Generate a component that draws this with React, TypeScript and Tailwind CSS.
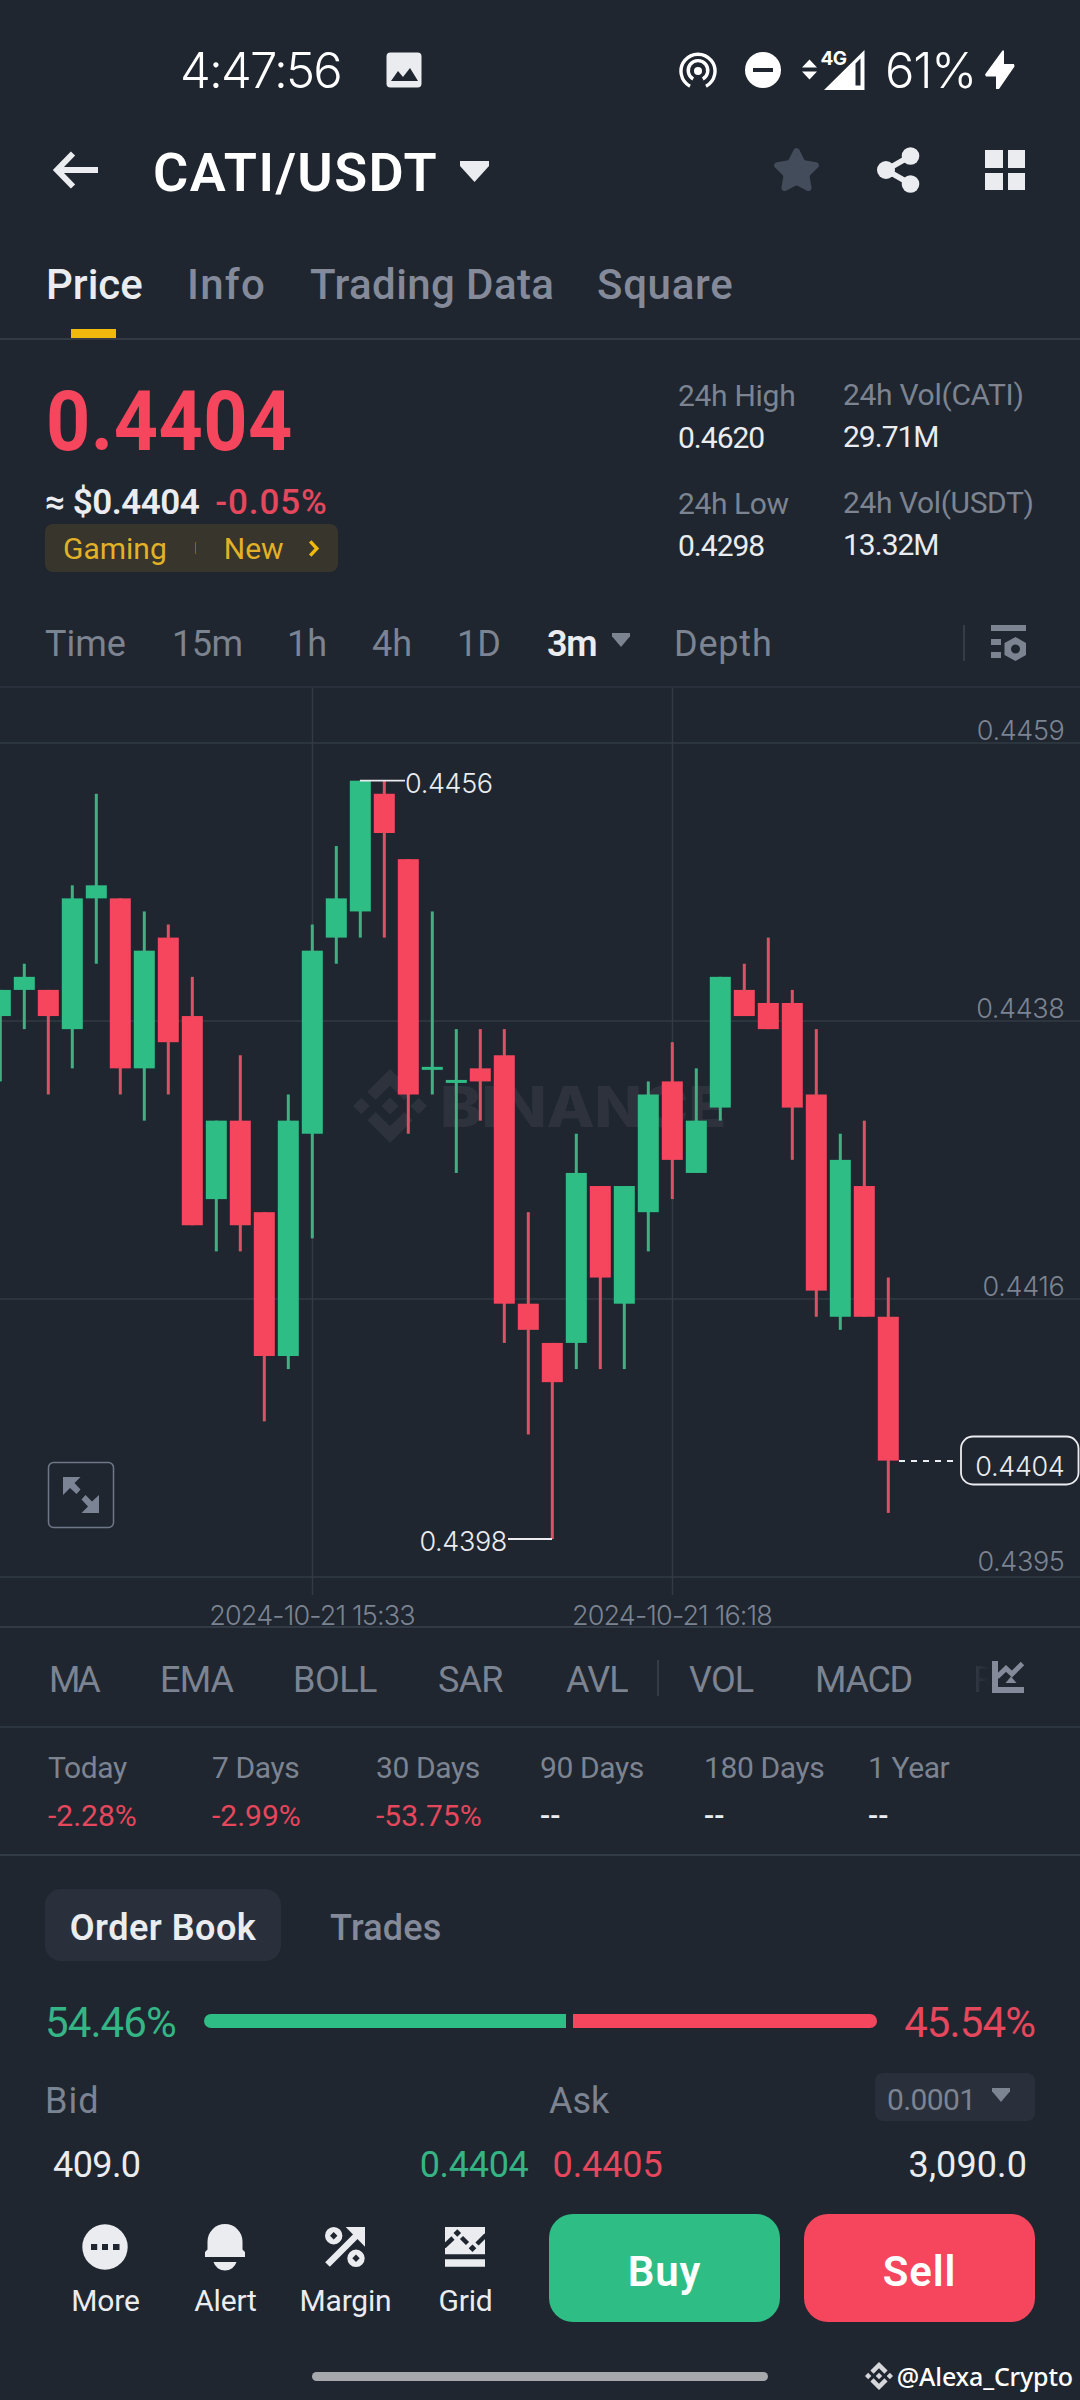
import React from "react";
import { clsx } from "clsx";
import { Star } from "lucide-react";

type Candle = [open: number, high: number, low: number, close: number];

// 3m candles, in ticks of 0.0001
const candles: Candle[] = [
  [4438, 4440, 4433, 4440],
  [4440, 4442, 4437, 4441],
  [4440, 4440, 4432, 4438],
  [4437, 4448, 4434, 4447],
  [4447, 4455, 4442, 4448],
  [4447, 4447, 4432, 4434],
  [4434, 4446, 4430, 4443],
  [4444, 4445, 4432, 4436],
  [4438, 4441, 4422, 4422],
  [4424, 4430, 4420, 4430],
  [4430, 4435, 4420, 4422],
  [4423, 4423, 4407, 4412],
  [4412, 4432, 4411, 4430],
  [4429, 4445, 4421, 4443],
  [4444, 4451, 4442, 4447],
  [4446, 4456, 4444, 4456],
  [4455, 4456, 4444, 4452],
  [4450, 4450, 4429, 4432],
  [4434, 4446, 4432, 4434],
  [4433, 4437, 4426, 4433],
  [4434, 4437, 4430, 4433],
  [4435, 4437, 4413, 4416],
  [4416, 4423, 4406, 4414],
  [4413, 4413, 4398, 4410],
  [4413, 4429, 4411, 4426],
  [4425, 4425, 4411, 4418],
  [4416, 4425, 4411, 4425],
  [4423, 4433, 4420, 4432],
  [4433, 4436, 4424, 4427],
  [4426, 4434, 4426, 4430],
  [4431, 4441, 4430, 4441],
  [4440, 4442, 4438, 4438],
  [4439, 4444, 4437, 4437],
  [4439, 4440, 4427, 4431],
  [4432, 4437, 4415, 4417],
  [4415, 4429, 4414, 4427],
  [4425, 4430, 4415, 4415],
  [4415, 4418, 4400, 4404],
];

const priceLines = [
  { y: 55, label: "0.4459", labelY: 52 },
  { y: 333, label: "0.4438", labelY: 330 },
  { y: 611, label: "0.4416", labelY: 608 },
  { y: 889, label: "0.4395", labelY: 883 },
];

const timeLines = [
  { x: 312, label: "2024-10-21 15:33" },
  { x: 672, label: "2024-10-21 16:18" },
];

const stats = [
  { label: "24h High", value: "0.4620", label2: "24h Low", value2: "0.4298", width: "w-[165px]" },
  { label: "24h Vol(CATI)", value: "29.71M", label2: "24h Vol(USDT)", value2: "13.32M", width: "w-[237px] -mt-px" },
];

const periods = [
  { label: "Today", value: "-2.28%" },
  { label: "7 Days", value: "-2.99%" },
  { label: "30 Days", value: "-53.75%" },
  { label: "90 Days", value: "--" },
  { label: "180 Days", value: "--" },
  { label: "1 Year", value: "--" },
];

const toY = (tick: number) => 92.7 + (4456 - tick) * 13.075;

function BinanceLogo(props: React.SVGProps<SVGSVGElement>) {
  return (
    <svg viewBox="0 0 126.61 126.61" fill="currentColor" {...props}>
      <path d="M38.73 53.2l24.59-24.58 24.6 24.6 14.3-14.31L63.32 0l-38.9 38.9zM0 63.31L14.3 49l14.31 14.31-14.31 14.3zM38.73 73.41L63.32 98l24.6-24.6 14.31 14.29-38.91 38.92-38.91-38.88zM98 63.31L112.3 49l14.31 14.3-14.31 14.32zM77.83 63.3L63.32 48.78 48.81 63.28l14.51 14.5z" />
    </svg>
  );
}

function Caret({ className }: { className?: string }) {
  return (
    <svg viewBox="0 0 28 21" preserveAspectRatio="none" fill="currentColor" className={className}>
      <path d="M0 0H28V5L14 21L0 5Z" />
    </svg>
  );
}

function StatusBar() {
  return (
    <div className="flex h-[140px] items-center font-['Inter',sans-serif] text-white">
      <span className="ml-[180px] w-[206px] text-[49px] font-light leading-none tracking-[-1.8px]">4:47:56</span>
      <svg viewBox="0 0 36 36" className="size-9">
        <rect x="0.5" y="0.5" width="35" height="35" rx="4" fill="#eaecef" />
        <path d="M5 29l7-10 5 6 7-9 8 13z" fill="#1f262f" />
      </svg>
      <svg viewBox="0 0 38 38" fill="none" stroke="currentColor" strokeWidth="3.4" className="ml-[257px] size-[38px]">
        <path d="M11 35.2A17 17 0 1 1 27 35.2" />
        <path d="M14.2 28A9.8 9.8 0 1 1 23.8 28" />
        <circle cx="19" cy="20" r="4" fill="currentColor" stroke="none" />
      </svg>
      <svg viewBox="0 0 36 36" className="ml-[28px] size-9">
        <circle cx="18" cy="18" r="18" fill="currentColor" />
        <path d="M8 18H28" stroke="#1f262f" strokeWidth="4" />
      </svg>
      <svg viewBox="0 0 64 42" fill="currentColor" className="ml-[20px] h-[42px] w-[64px] overflow-visible">
        <path d="M1 18.5L8.5 10.5 16 18.5zM1 22.5L8.5 30.500 16 22.500z" />
        <text x="19.5" y="15.5" className="text-[19px] font-bold tracking-[-0.5px]">4G</text>
        <path fillRule="evenodd" d="M23 41L63.5 1V41zM54.5 14.5V36.5H59.5V9.5z" />
      </svg>
      <span className="ml-[20px] w-[100px] text-[49px] font-light leading-none tracking-[-1.3px]">61%</span>
      <svg viewBox="0 0 30 40" fill="currentColor" className="h-10 w-[30px]">
        <path d="M17.5 0.5L0 24.5L1 26.5H11V39H14L29.5 16.5L29 14H19V0.5z" />
      </svg>
    </div>
  );
}

function Header() {
  return (
    <header className="flex h-16 items-center text-[#eaecef]">
      <svg viewBox="0 0 48 40" fill="none" stroke="currentColor" strokeWidth="6" className="ml-[51px] mb-1 h-10 w-12">
        <path d="M22 3.5L6 20L22 36.5M6 20H47" />
      </svg>
      <h1 className="ml-[54px] mt-px text-[54px] font-semibold leading-none tracking-[1.4px] text-white">CATI/USDT</h1>
      <Caret className="mb-0.5 ml-[22px] h-[21px] w-[29px]" />
      <Star fill="currentColor" strokeWidth={2} className="mb-1 ml-auto size-[49px] text-[#434c5a]" />
      <svg viewBox="0 0 46 48" fill="currentColor" className="mb-1 ml-[54px] h-12 w-[46px]">
        <path d="M35.5 10L11 24L35.5 38" fill="none" stroke="currentColor" strokeWidth="5.5" />
        <circle cx="11" cy="24" r="9" />
        <circle cx="35.5" cy="10" r="8.8" />
        <circle cx="35.5" cy="38" r="8.8" />
      </svg>
      <div className="mb-1 ml-[64px] mr-[55px] grid size-10 grid-cols-2 gap-[5px]">
        {[0, 1, 2, 3].map((i) => (
          <span key={i} className="bg-[#eaecef]" />
        ))}
      </div>
    </header>
  );
}

function Tabs() {
  return (
    <nav className="flex h-[136px] border-b-2 border-[#323a45] pl-[46px] text-[42px] font-medium leading-[42px] text-[#848a99]">
      <div className="flex w-[141px] flex-col pt-[60px] text-[#eaecef]">
        <span>Price</span>
        <span className="ml-[25px] mt-[23px] h-[9px] w-[45px] bg-[#f0b90b]" />
      </div>
      <span className="w-[123px] pt-[60px] tracking-[1.3px]">Info</span>
      <span className="w-[287px] pt-[60px] tracking-[0.4px]">Trading Data</span>
      <span className="pt-[60px] tracking-[0.7px]">Square</span>
    </nav>
  );
}

function PriceSummary() {
  return (
    <section className="flex h-[260px] justify-between pl-[45px]">
      <div className="flex flex-col items-start pt-[40px]">
        <div className="ml-px origin-left scale-x-[0.92] text-[84px] font-bold leading-[84px] tracking-[0.5px] text-[#f6465d]">
          0.4404
        </div>
        <div className="mt-[21px] flex gap-4 text-[35px] leading-9">
          <span className="font-semibold tracking-[-0.5px] text-[#eaecef]">≈ $0.4404</span>
          <span className="font-medium tracking-[0.9px] text-[#e5475c]">-0.05%</span>
        </div>
        <div className="mt-[3px] flex h-12 w-[293px] items-center rounded-lg bg-[#37352c] pl-[18px] text-[30px] leading-none text-[#e3b125]">
          <span className="pt-px">Gaming</span>
          <span className="ml-[28px] h-3 w-px bg-[#7d6726]" />
          <span className="ml-[28px] pt-px">New</span>
          <svg viewBox="0 0 12 18" fill="none" stroke="#f0b90b" strokeWidth="3.6" className="ml-[24px] h-[17px] w-3">
            <path d="M2 1.5L9 9L2 16.5" />
          </svg>
        </div>
      </div>
      <div className="flex pt-[35px] text-[30px] leading-[42px]">
        {stats.map((s) => (
          <div key={s.label} className={clsx("flex flex-col gap-6", s.width)}>
            <div>
              <div className="tracking-[-0.3px] text-[#7c8391]">{s.label}</div>
              <div className="font-[450] tracking-[-1px] text-[#eaecef]">{s.value}</div>
            </div>
            <div>
              <div className="tracking-[-0.4px] text-[#7c8391]">{s.label2}</div>
              <div className="font-[450] tracking-[-1px] text-[#eaecef]">{s.value2}</div>
            </div>
          </div>
        ))}
      </div>
    </section>
  );
}

function Intervals() {
  return (
    <div className="flex h-[88px] items-center border-b-2 border-[#29303b] pl-[45px] text-[36px] leading-none text-[#7c8391]">
      <span className="w-[127px] pt-0.5">Time</span>
      <span className="w-[115px] pt-0.5 tracking-[-0.5px]">15m</span>
      <span className="w-[85px] pt-0.5">1h</span>
      <span className="w-[85px] pt-0.5">4h</span>
      <span className="w-[90px] pt-0.5">1D</span>
      <span className="w-[65px] pt-0.5 font-semibold tracking-[-1.2px] text-[#eaecef]">3m</span>
      <Caret className="mb-1.5 h-[14px] w-[18px]" />
      <span className="ml-[44px] pt-0.5 tracking-[0.8px]">Depth</span>
      <span className="ml-auto h-9 w-0.5 bg-[#343c48]" />
      <svg viewBox="0 0 36 37" fill="currentColor" className="ml-[26px] mr-[53px] h-[37px] w-9">
        <path d="M0 0H35V6H0zM0 14H10V20H0zM0 27H10V33H0z" />
        <path fillRule="evenodd" d="M24.5 12L35 18V30L24.5 36L13.5 30V18zM24.5 19.5A4.5 4.5 0 1 0 24.5 28.5A4.5 4.5 0 1 0 24.5 19.5z" />
      </svg>
    </div>
  );
}

function Chart() {
  return (
    <div className="h-[940px] border-b-2 border-[#323a45]">
      <svg viewBox="0 0 1080 938" className="block h-[938px] w-[1080px] overflow-visible font-['Inter',sans-serif] text-[27px] font-light tracking-[-0.35px]">
        <g stroke="#323a45" strokeWidth="1.5">
          {priceLines.map((l) => (
            <path key={l.label} d={`M0 ${l.y}H1080`} />
          ))}
          {timeLines.map((l) => (
            <path key={l.label} d={`M${l.x + 0.5} 0V907`} />
          ))}
        </g>
        <g fill="#2d323c" color="#2d323c">
          <BinanceLogo x="353" y="381" width="74" height="74" />
          <text x="440" y="439" textLength="286" lengthAdjust="spacingAndGlyphs" className="text-[57px] font-extrabold">BINANCE</text>
        </g>
        <g fill="#7c8391">
          {priceLines.map((l) => (
            <text key={l.label} x="1064.5" y={l.labelY} textAnchor="end">{l.label}</text>
          ))}
          {timeLines.map((l) => (
            <text key={l.label} x={l.x} y="937" textAnchor="middle" className="tracking-[-0.85px]">{l.label}</text>
          ))}
        </g>
        {candles.map(([open, high, low, close], i) => {
          const x = i * 24 + 0.3;
          const up = close >= open;
          const top = toY(Math.max(open, close));
          const body = Math.abs(open - close) * 13.075;
          return (
            <g key={i}>
              <rect x={x - 1.5} y={toY(high)} width="3" height={toY(low) - toY(high)} fill={up ? "#3fb184" : "#dc5068"} />
              <rect x={x - 10.5} y={body ? top : top - 1.5} width="21" height={body || 3} fill={up ? "#2ebd85" : "#f6465d"} />
            </g>
          );
        })}
        <g fill="none" stroke="#eaecef" strokeWidth="1.8">
          <path d="M360 92.7H405M508 851H552" />
          <path d="M899 773H954" strokeDasharray="6 6" />
          <rect x="961" y="748.5" width="117.5" height="48" rx="12" />
        </g>
        <g fill="#eaecef">
          <text x="405" y="105">0.4456</text>
          <text x="507" y="863" textAnchor="end">0.4398</text>
          <text x="1064.5" y="788" textAnchor="end">0.4404</text>
        </g>
        <rect x="48.5" y="774.5" width="65" height="65" rx="5" fill="none" stroke="#6f7888" strokeWidth="1.5" />
        <g fill="#7b8495">
          <path d="M63 789H80.5L74.500 795L80.500 801.500L76.500 806L70 800L63 807z" />
          <path d="M99 825H81.500L88 818.500L81.500 811.500L85.500 807L92 813.500L99 807z" />
        </g>
      </svg>
    </div>
  );
}

function Indicators() {
  return (
    <div className="flex h-[100px] items-center overflow-hidden border-b-2 border-[#2c343f] pl-[49px] pt-[6px] text-[36px] leading-none tracking-[-0.8px] text-[#7c8391]">
      <span className="w-[111px] tracking-[-3.5px]">MA</span>
      <span className="w-[133px]">EMA</span>
      <span className="w-[145px] tracking-[-0.5px]">BOLL</span>
      <span className="w-[128px]">SAR</span>
      <span className="w-[91px]">AVL</span>
      <span className="mb-1 h-9 w-0.5 bg-[#343c48]" />
      <span className="ml-[30px] w-[126px]">VOL</span>
      <span className="w-[158px] tracking-[-1.3px]">MACD</span>
      {/* next indicator fades out under the settings icon */}
      <span className="w-4 overflow-hidden bg-gradient-to-r from-[#343b47] to-[#1f262f] bg-clip-text text-transparent">R</span>
      <svg viewBox="0 0 32 32" fill="currentColor" className="mb-1.5 ml-[3px] size-8 shrink-0 text-[#848a99]">
        <path d="M0 0H6V26H32V32H0z" />
        <path d="M5 16L14 7.5L20 13L30.5 2.5" fill="none" stroke="currentColor" strokeWidth="5" />
        <path d="M13.5 22H24.5L19 15.5z" />
      </svg>
    </div>
  );
}

function Performance() {
  return (
    <div className="flex h-32 border-b-2 border-[#323a45] pl-12 pt-[16px] text-[30px] leading-[48px]">
      {periods.map((p) => (
        <div key={p.label} className="w-[164px]">
          <div className="tracking-[-0.4px] text-[#7c8391]">{p.label}</div>
          <div className={p.value === "--" ? "font-medium text-[#eaecef]" : "text-[#e5475c]"}>{p.value}</div>
        </div>
      ))}
    </div>
  );
}

function OrderBook() {
  return (
    <section className="px-[45px] pt-[33px]">
      <div className="flex h-[72px] text-[36px] leading-[78px]">
        <span className="w-[236px] rounded-2xl bg-[#29303b] text-center font-semibold tracking-[0.5px] text-[#eaecef]">
          Order Book
        </span>
        <span className="ml-[49px] font-medium tracking-[0.2px] text-[#848a99]">Trades</span>
      </div>

      <div className="mt-[30px] flex h-[62px] items-center text-[42px] leading-none tracking-[-0.9px]">
        <span className="w-[159px] pt-0.5 text-[#35b585]">54.46%</span>
        <span className="mb-0.5 h-[14px] w-[362px] rounded-l-full bg-[#2ebd85]" />
        <span className="mb-0.5 ml-[7px] h-[14px] w-[304px] rounded-r-full bg-[#f6465d]" />
        <span className="ml-auto pt-0.5 text-[#e5475c]">45.54%</span>
      </div>

      <div className="mt-5 flex h-12 text-[36px] leading-[56px] text-[#7c8391]">
        <span className="w-[504px] tracking-[1px]">Bid</span>
        <span>Ask</span>
        <span className="ml-auto flex w-[160px] items-center rounded-lg bg-[#29303b] pl-[12px] text-[30px] leading-none tracking-[-0.6px]">
          <span className="pt-1.5">0.0001</span>
          <Caret className="mb-1 ml-[16px] h-[14px] w-[18px]" />
        </span>
      </div>

      <div className="mt-3 flex h-[62px] items-center px-2 pt-0.5 text-[36px] leading-none">
        <span className="font-[450] tracking-[-0.6px] text-[#eaecef]">409.0</span>
        <span className="ml-auto tracking-[-0.3px] text-[#35b585]">0.4404</span>
        <span className="ml-[24px] w-[474px] tracking-[-0.1px] text-[#e5475c]">0.4405</span>
        <span className="-ml-[118px] font-[450] tracking-[0.1px] text-[#eaecef]">3,090.0</span>
      </div>
    </section>
  );
}

const actions = [
  {
    label: "More",
    icon: (
      <>
        <circle cx="24" cy="24" r="22.7" />
        <path d="M10 21H16.2V27H10zM21 21H27V27H21zM32 21H38.5V27H32z" fill="#1f262f" />
      </>
    ),
  },
  {
    label: "Alert",
    icon: <path d="M24 1A17.5 17.5 0 0 1 41.5 18.5V26.5L44 29V34H4V29L6.5 26.5V18.5A17.5 17.5 0 0 1 24 1zM12.5 39H35.5A12 12 0 0 1 12.5 39z" />,
  },
  {
    label: "Margin",
    icon: (
      <>
        <path d="M6.5 41.5L38 10" stroke="currentColor" strokeWidth="6.6" />
        <path d="M24.7 4H44V23.7z" />
        <path fillRule="evenodd" d="M12.7 4A8.7 8.7 0 1 1 12.7 21.4A8.7 8.7 0 1 1 12.7 4zM12.7 9L9 12.7L12.7 16.4L16.4 12.7z" />
        <path fillRule="evenodd" d="M35 26.6A8.7 8.7 0 1 1 35 44A8.7 8.7 0 1 1 35 26.6zM35 31.6L31.3 35.3L35 39L38.7 35.3z" />
      </>
    ),
  },
  {
    label: "Grid",
    icon: (
      <>
        <path d="M4 4H44V31.3H4zM4 36.3H44V43.7H4z" />
        <path d="M3 23.5L12 15M20.5 14.5L26.5 20.5M36 21L45 12" stroke="#1f262f" strokeWidth="4.5" />
        <path d="M16.3 6.2L20.1 10L16.3 13.8L12.5 10zM31.5 21.5L35.3 25.3L31.5 29.1L27.7 25.3z" fill="#1f262f" />
      </>
    ),
  },
];

function BottomBar() {
  return (
    <footer className="mt-[19px]">
      <div className="flex h-[108px] pl-[45px] pr-[45px]">
        {actions.map((a) => (
          <div key={a.label} className="flex w-[120px] flex-col items-center pt-[9px] text-[30px] leading-none text-[#eaecef]">
            <svg viewBox="0 0 48 48" fill="currentColor" className="size-12">
              {a.icon}
            </svg>
            <span className="ml-px mt-[15px] tracking-[-0.2px]">{a.label}</span>
          </div>
        ))}
        <button type="button" className="ml-6 w-[231px] rounded-[24px] bg-[#2ebd85] pt-1.5 text-[42px] font-semibold tracking-[0.8px] text-white">
          Buy
        </button>
        <button type="button" className="ml-6 w-[231px] rounded-[24px] bg-[#f6465d] pt-1.5 text-[42px] font-semibold tracking-[0.8px] text-white">
          Sell
        </button>
      </div>
      <div className="relative mt-[38px] flex h-8 items-center justify-center">
        <span className="h-[9px] w-[456px] rounded-full bg-[#a7a8ac]" />
        <div className="absolute right-[7px] flex items-center gap-1 font-['Noto_Sans',sans-serif] text-[25px] font-medium leading-none tracking-[-0.15px] text-white">
          <BinanceLogo className="size-7 text-[#d5d7da]" />
          @Alexa_Crypto
        </div>
      </div>
    </footer>
  );
}

export default function App() {
  return (
    <div className="h-[2400px] w-[1080px] overflow-hidden bg-[#1f262f] font-['Roboto',sans-serif]">
      <StatusBar />
      <Header />
      <Tabs />
      <PriceSummary />
      <Intervals />
      <Chart />
      <Indicators />
      <Performance />
      <OrderBook />
      <BottomBar />
    </div>
  );
}
